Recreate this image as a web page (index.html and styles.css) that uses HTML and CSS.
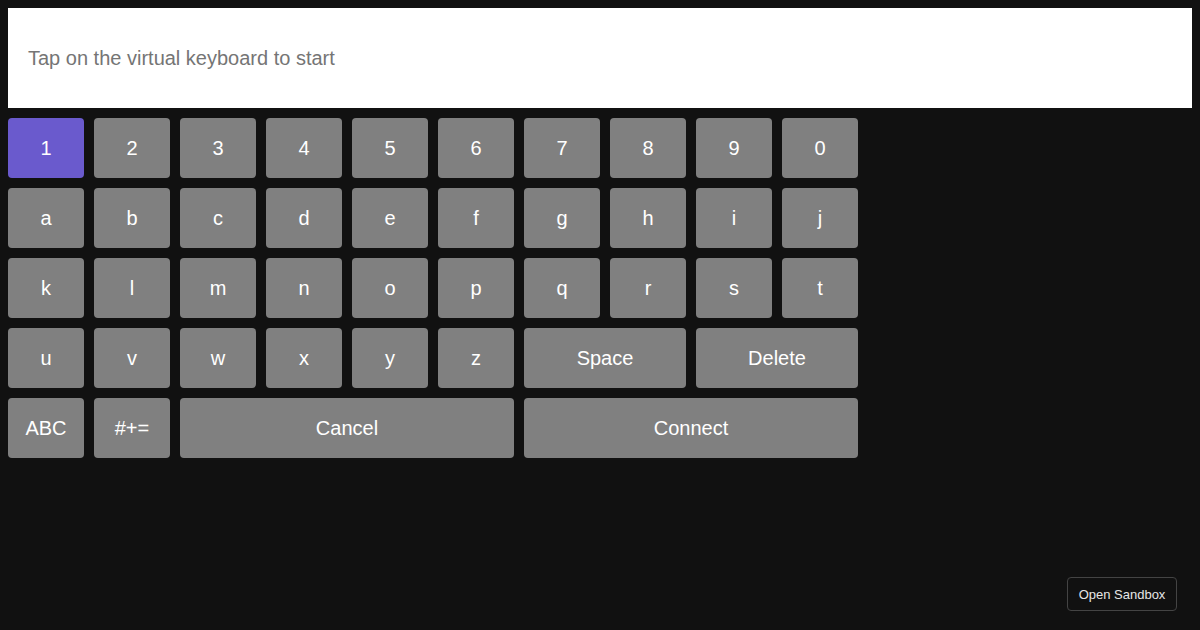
FILE: index.html
```html
<!DOCTYPE html>
<html>
<head>
<meta charset="utf-8">
<link rel="stylesheet" href="styles.css">
</head>
<body>
<div class="input">Tap on the virtual keyboard to start</div>
<div class="keyboard">
  <div class="key active">1</div><div class="key">2</div><div class="key">3</div><div class="key">4</div><div class="key">5</div><div class="key">6</div><div class="key">7</div><div class="key">8</div><div class="key">9</div><div class="key">0</div>
  <div class="key">a</div><div class="key">b</div><div class="key">c</div><div class="key">d</div><div class="key">e</div><div class="key">f</div><div class="key">g</div><div class="key">h</div><div class="key">i</div><div class="key">j</div>
  <div class="key">k</div><div class="key">l</div><div class="key">m</div><div class="key">n</div><div class="key">o</div><div class="key">p</div><div class="key">q</div><div class="key">r</div><div class="key">s</div><div class="key">t</div>
  <div class="key">u</div><div class="key">v</div><div class="key">w</div><div class="key">x</div><div class="key">y</div><div class="key">z</div><div class="key span2">Space</div><div class="key span2">Delete</div>
  <div class="key">ABC</div><div class="key">#+=</div><div class="key span4">Cancel</div><div class="key span4">Connect</div>
</div>
<button class="sandbox">Open Sandbox</button>
</body>
</html>
```
FILE: styles.css
```css
html, body {
  margin: 0;
  background: #111111;
  height: 100%;
}
body {
  padding: 8px;
  box-sizing: border-box;
  font-family: "Liberation Sans", Arial, sans-serif;
}
.input {
  height: 100px;
  background: #ffffff;
  color: #757575;
  font-size: 20px;
  display: flex;
  align-items: center;
  padding-left: 20px;
  box-sizing: border-box;
}
.keyboard {
  margin-top: 10px;
  display: grid;
  grid-template-columns: repeat(10, 76px);
  grid-auto-rows: 60px;
  gap: 10px;
}
.key {
  background: #808080;
  color: #ffffff;
  border-radius: 4px;
  font-size: 20px;
  display: flex;
  align-items: center;
  justify-content: center;
}
.key.active {
  background: #6a5acd;
}
.span2 { grid-column: span 2; }
.span4 { grid-column: span 4; }
.sandbox {
  position: fixed;
  right: 23px;
  bottom: 19px;
  height: 34px;
  width: 110px;
  padding: 0;
  background: #111111;
  color: #e6e6e6;
  border: 1px solid #444444;
  border-radius: 4px;
  font-family: "Liberation Sans", Arial, sans-serif;
  font-size: 13px;
}
```
